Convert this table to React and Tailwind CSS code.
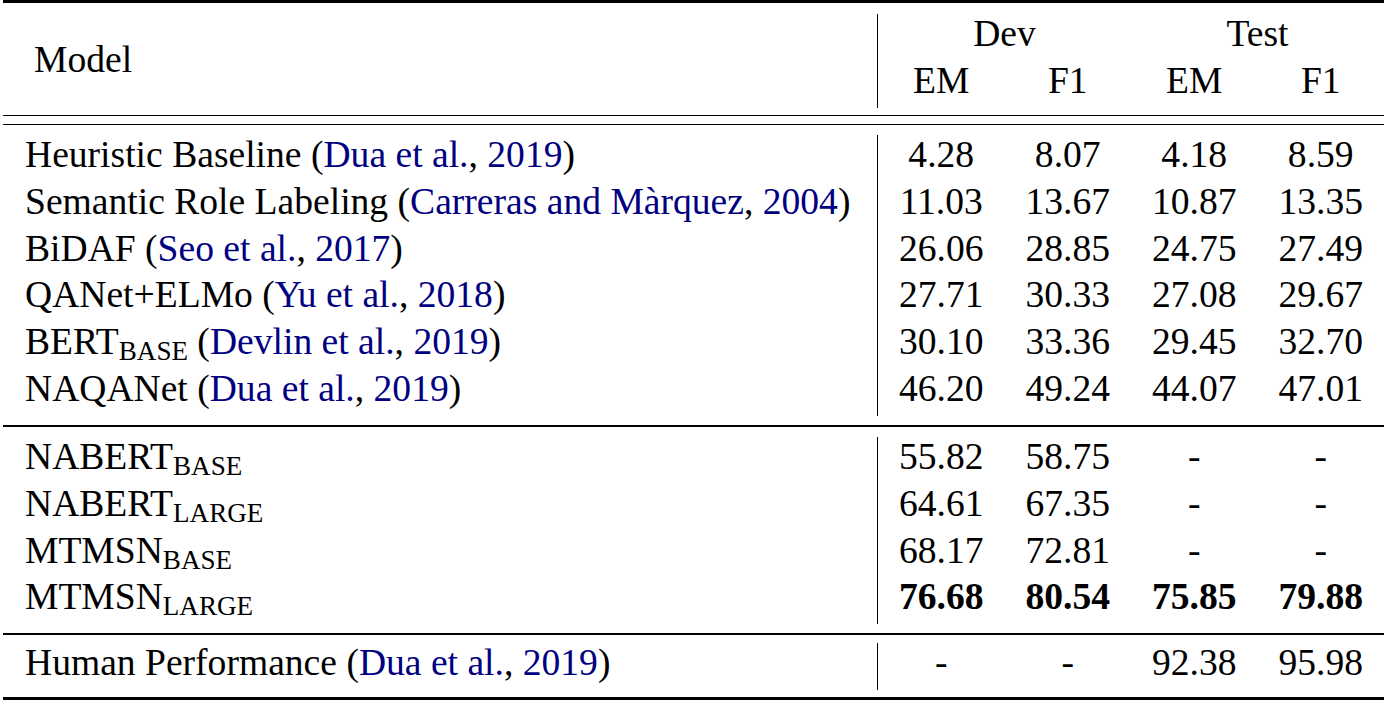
import React from "react";

const LINK = "text-[#000080]";

function Cite({ who, year }) {
  return (
    <>
      {" ("}
      <span className={LINK}>{who}</span>
      {", "}
      <span className={LINK}>{year}</span>
      {")"}
    </>
  );
}

function Sub({ name, sub }) {
  return (
    <>
      {name}
      <sub className="text-[0.72em] bottom-[-0.22em]">{sub}</sub>
    </>
  );
}

const sectionOne = [
  { label: <>Heuristic Baseline<Cite who="Dua et al." year="2019" /></>, vals: ["4.28", "8.07", "4.18", "8.59"] },
  { label: <>Semantic Role Labeling<Cite who="Carreras and Màrquez" year="2004" /></>, vals: ["11.03", "13.67", "10.87", "13.35"] },
  { label: <>BiDAF<Cite who="Seo et al." year="2017" /></>, vals: ["26.06", "28.85", "24.75", "27.49"] },
  { label: <>QANet+ELMo<Cite who="Yu et al." year="2018" /></>, vals: ["27.71", "30.33", "27.08", "29.67"] },
  { label: <><Sub name="BERT" sub="BASE" /><Cite who="Devlin et al." year="2019" /></>, vals: ["30.10", "33.36", "29.45", "32.70"] },
  { label: <>NAQANet<Cite who="Dua et al." year="2019" /></>, vals: ["46.20", "49.24", "44.07", "47.01"] },
];

const sectionTwo = [
  { label: <Sub name="NABERT" sub="BASE" />, vals: ["55.82", "58.75", "-", "-"] },
  { label: <Sub name="NABERT" sub="LARGE" />, vals: ["64.61", "67.35", "-", "-"] },
  { label: <Sub name="MTMSN" sub="BASE" />, vals: ["68.17", "72.81", "-", "-"] },
  { label: <Sub name="MTMSN" sub="LARGE" />, vals: ["76.68", "80.54", "75.85", "79.88"], bold: true },
];

const sectionThree = [
  { label: <>Human Performance<Cite who="Dua et al." year="2019" /></>, vals: ["-", "-", "92.38", "95.98"] },
];

function Row({ row }) {
  return (
    <div className="flex h-[46.8px]">
      <div className="w-[874px] pl-[22px] leading-[40px] whitespace-nowrap">{row.label}</div>
      <div className="flex-1 grid grid-cols-4 border-l border-black">
        {row.vals.map((v, i) => (
          <div key={i} className={"text-center leading-[40px] " + (row.bold ? "font-bold" : "")}>
            {v}
          </div>
        ))}
      </div>
    </div>
  );
}

function Section({ rows }) {
  return (
    <div className="flex flex-col">
      {rows.map((r, i) => (
        <Row key={i} row={r} />
      ))}
    </div>
  );
}

export default function App() {
  return (
    <div className="w-[1388px] h-[704px] bg-white text-black pl-[3px] pr-[4px] [font-family:'Liberation_Serif',serif] text-[37.6px]">
      <div className="h-[3px] bg-black" />
      <div className="h-[11px]" />
      {/* header */}
      <div className="flex h-[93.6px]">
        <div className="w-[874px] pl-[31px] flex items-center leading-none pb-[3px]">Model</div>
        <div className="flex-1 grid grid-cols-4 grid-rows-2 border-l border-black">
          <div className="col-span-2 text-center leading-[40px]">Dev</div>
          <div className="col-span-2 text-center leading-[40px]">Test</div>
          <div className="text-center leading-[40px]">EM</div>
          <div className="text-center leading-[40px]">F1</div>
          <div className="text-center leading-[40px]">EM</div>
          <div className="text-center leading-[40px]">F1</div>
        </div>
      </div>
      <div className="h-[7px]" />
      <div className="h-[1.5px] bg-black" />
      <div className="h-[7.5px]" />
      <div className="h-[1.5px] bg-black" />
      <div className="h-[10px]" />
      <Section rows={sectionOne} />
      <div className="h-[9.5px]" />
      <div className="h-[1.8px] bg-black" />
      <div className="h-[9.8px]" />
      <Section rows={sectionTwo} />
      <div className="h-[9px]" />
      <div className="h-[1.8px] bg-black" />
      <div className="h-[8.5px]" />
      <Section rows={sectionThree} />
      <div className="h-[6.5px]" />
      <div className="h-[3px] bg-black" />
    </div>
  );
}
